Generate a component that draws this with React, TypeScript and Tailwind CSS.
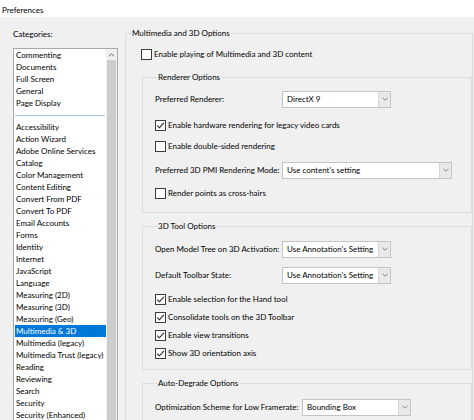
import type { ReactNode } from 'react'

const font = { fontFamily: 'Lato, "Open Sans", sans-serif' }

const topCategories = ['Commenting', 'Documents', 'Full Screen', 'General', 'Page Display']

const categories = [
  'Accessibility',
  'Action Wizard',
  'Adobe Online Services',
  'Catalog',
  'Color Management',
  'Content Editing',
  'Convert From PDF',
  'Convert To PDF',
  'Email Accounts',
  'Forms',
  'Identity',
  'Internet',
  'JavaScript',
  'Language',
  'Measuring (2D)',
  'Measuring (3D)',
  'Measuring (Geo)',
  'Multimedia & 3D',
  'Multimedia (legacy)',
  'Multimedia Trust (legacy)',
  'Reading',
  'Reviewing',
  'Search',
  'Security',
  'Security (Enhanced)',
]

function CheckBox({ checked, label }: { checked?: boolean; label: string }) {
  return (
    <div className="flex items-center h-[18px] gap-[2px]">
      <span className="w-[11px] h-[11px] border border-[#3c3c3c] bg-white flex items-center justify-center shrink-0">
        {checked && (
          <svg width="9" height="9" viewBox="0 0 9 9">
            <path d="M1.2 4.6 L3.4 6.8 L7.9 1.8" fill="none" stroke="#222222" strokeWidth="1.1" />
          </svg>
        )}
      </span>
      <span>{label}</span>
    </div>
  )
}

function Dropdown({ value, width }: { value: string; width: string }) {
  return (
    <div className={`${width} h-[17px] border border-[#c4c4c4] bg-white flex items-stretch`}>
      <span className="flex-1 pl-[4px] flex items-center whitespace-nowrap overflow-hidden">{value}</span>
      <span className="w-[12px] bg-[#e9e9e9] border-l border-[#d6d6d6] flex items-center justify-center">
        <svg width="6" height="4" viewBox="0 0 6 4">
          <path d="M0.5 0.8 L3 3.2 L5.5 0.8" fill="none" stroke="#7a7a7a" strokeWidth="0.9" />
        </svg>
      </span>
    </div>
  )
}

function Row({ label, labelWidth, children }: { label: string; labelWidth: string; children: ReactNode }) {
  return (
    <div className="flex items-center h-[18px]">
      <span className={`${labelWidth} shrink-0`}>{label}</span>
      {children}
    </div>
  )
}

function Group({ title, className, children }: { title: string; className?: string; children: ReactNode }) {
  return (
    <fieldset className={`border border-[#dcdcdc] ${className ?? ''}`}>
      <legend className="ml-[2px] px-[1px] leading-[12px]">{title}</legend>
      {children}
    </fieldset>
  )
}

export default function App() {
  return (
    <div className="w-[474px] h-[420px] overflow-hidden bg-[#f0f0f0] text-[8px] text-black" style={font}>
      <div className="h-[17px] bg-white flex items-center pl-[2px] pt-[2px]">Preferences</div>

      <div className="flex">
        {/* categories */}
        <div className="w-[125px] shrink-0 pl-[13px]">
          <div className="h-[31px] flex items-center pt-[3px]">Categories:</div>
          <div className="w-[105px] h-[400px] border border-[#a9a9a9] bg-white flex">
            <div className="flex-1 flex flex-col pl-[1px]">
              {topCategories.map((c) => (
                <div key={c} className="h-[12px] leading-[12px] pl-[1px]">
                  {c}
                </div>
              ))}
              <div className="h-[12px] flex items-center pr-[1px]">
                <div className="w-full h-[1px] bg-[#9cc3e8]" />
              </div>
              {categories.map((c) => (
                <div
                  key={c}
                  className={`h-[12px] leading-[12px] pl-[1px] whitespace-nowrap ${
                    c === 'Multimedia & 3D' ? 'bg-[#0078d7] text-white' : ''
                  }`}
                >
                  {c}
                </div>
              ))}
            </div>
            <div className="w-[11px] bg-[#f0f0f0] flex flex-col items-center">
              <div className="h-[11px] flex items-center justify-center">
                <svg width="7" height="4" viewBox="0 0 7 4">
                  <path d="M0.8 3.4 L3.5 0.8 L6.2 3.4" fill="none" stroke="#606060" strokeWidth="1" />
                </svg>
              </div>
              <div className="w-[9px] flex-1 bg-[#cdcdcd]" />
            </div>
          </div>
        </div>

        {/* options */}
        <div className="flex-1 pt-[10px] pr-[1px]">
          <fieldset className="border border-[#dcdcdc] h-[420px]">
            <legend className="ml-[5px] px-[1px] leading-[12px]">Multimedia and 3D Options</legend>
            <div className="pl-[15px] mt-[6px]">
              <CheckBox label="Enable playing of Multimedia and 3D content" />
            </div>

            <Group title="Renderer Options" className="ml-[16px] mt-[8px] pl-[12px] pb-[10px]">
              <div className="mt-[7px]">
                <Row label="Preferred Renderer:" labelWidth="w-[127px]">
                  <Dropdown value="DirectX 9" width="w-[109px]" />
                </Row>
              </div>
              <div className="mt-[8px]">
                <CheckBox checked label="Enable hardware rendering for legacy video cards" />
              </div>
              <div className="mt-[3px]">
                <CheckBox label="Enable double-sided rendering" />
              </div>
              <div className="mt-[6px]">
                <Row label="Preferred 3D PMI Rendering Mode:" labelWidth="w-[127px]">
                  <Dropdown value="Use content's setting" width="w-[170px]" />
                </Row>
              </div>
              <div className="mt-[5px]">
                <CheckBox label="Render points as cross-hairs" />
              </div>
            </Group>

            <Group title="3D Tool Options" className="ml-[16px] mt-[7px] pl-[12px] pb-[7px]">
              <div className="mt-[8px]">
                <Row label="Open Model Tree on 3D Activation:" labelWidth="w-[127px]">
                  <Dropdown value="Use Annotation's Setting" width="w-[109px]" />
                </Row>
              </div>
              <div className="mt-[8px]">
                <Row label="Default Toolbar State:" labelWidth="w-[127px]">
                  <Dropdown value="Use Annotation's Setting" width="w-[109px]" />
                </Row>
              </div>
              <div className="mt-[6px]">
                <CheckBox checked label="Enable selection for the Hand tool" />
                <CheckBox checked label="Consolidate tools on the 3D Toolbar" />
                <CheckBox checked label="Enable view transitions" />
                <CheckBox checked label="Show 3D orientation axis" />
              </div>
            </Group>

            <Group title="Auto-Degrade Options" className="ml-[16px] mt-[7px] pl-[12px] pb-[10px]">
              <div className="mt-[9px]">
                <Row label="Optimization Scheme for Low Framerate:" labelWidth="w-[147px]">
                  <Dropdown value="Bounding Box" width="w-[109px]" />
                </Row>
              </div>
            </Group>
          </fieldset>
        </div>
      </div>
    </div>
  )
}
